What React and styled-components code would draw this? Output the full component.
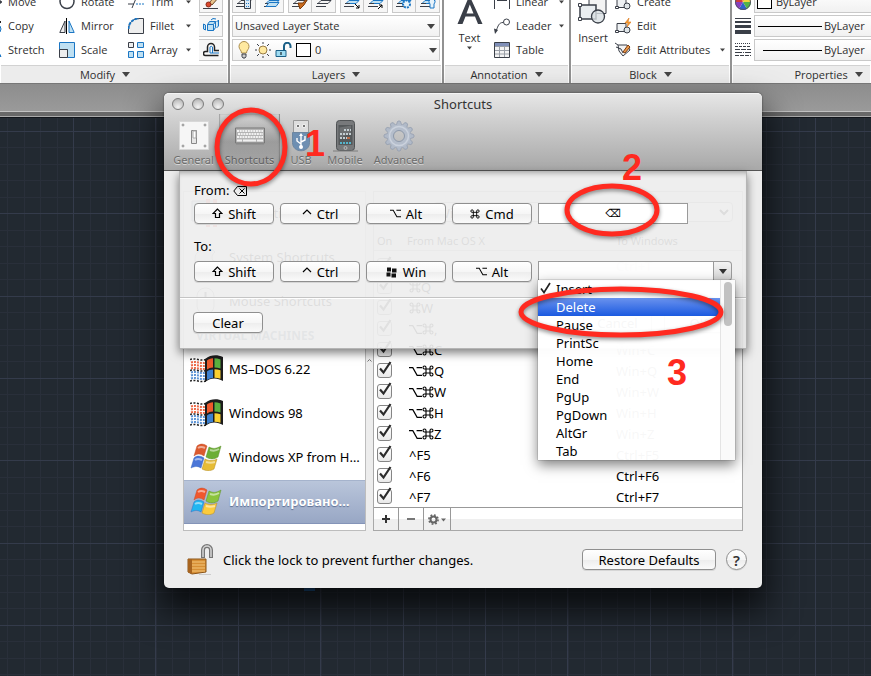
import React from "react";
import styled, { createGlobalStyle, css } from "styled-components";

const Global = createGlobalStyle`
  *, *::before, *::after { box-sizing: border-box; }
  html, body { margin: 0; }
  body { background: #222931; overflow: hidden; }
  button, input, select { font: inherit; color: inherit; margin: 0; }
`;

const macFont = `"Noto Sans", "DejaVu Sans", sans-serif`;
const ink = "#3a3f48";
const blue = "#1b76c4";
const pale = "#bfe0f2";
const red = "#ff2a20";

/* ---------- page ---------- */
const Page = styled.div`
  position: relative;
  min-height: 100vh;
  display: flex;
  flex-direction: column;
  overflow: hidden;
`;
const Ribbon = styled.header`
  display: grid;
  grid-template-columns: 230px 214px 127px 161px minmax(139px, 1fr);
  height: 84px;
  background: #fff;
  border-bottom: 1px solid #777;
  font: 11px/16px "Open Sans", sans-serif;
  color: #2f2f2f;
`;
const Panel = styled.section`
  display: flex;
  flex-direction: column;
  overflow: hidden;
  min-width: 0;
  border-right: ${(p) => (p.$last ? "0" : "2px solid #929292")};
`;
const PanelBody = styled.div`
  height: 65px;
  padding: 0 ${(p) => p.$right || 0}px 3px ${(p) => p.$left || 0}px;
  display: flex;
  align-items: flex-end;
  justify-content: ${(p) => p.$justify || "flex-start"};
`;
const PanelTitle = styled.button`
  height: 18px;
  margin: 0 1px;
  padding: 0 ${(p) => p.$right || 0}px 0 ${(p) => p.$left || 0}px;
  border: 0;
  border-top: 1px solid #d2d2d2;
  background: #ececec;
  display: flex;
  align-items: center;
  justify-content: center;
  gap: 7px;
`;
const Stack = styled.div`
  flex: none;
  width: ${(p) => (p.$w ? `${p.$w}px` : "auto")};
  display: flex;
  flex-direction: column;
`;
const Tool = styled.button`
  height: 24px;
  padding: 0;
  border: 0;
  background: none;
  display: flex;
  align-items: center;
  gap: 6px;
  white-space: nowrap;
  text-align: left;
`;
const ToolText = styled.span`
  min-width: ${(p) => p.$w || 0}px;
`;
const Square = styled.button`
  width: 24px;
  height: 22px;
  margin: 1px 0;
  padding: 0;
  border: 1px solid #c9c9c9;
  background: #f6f6f6;
  display: grid;
  place-items: center;
  & + & { border-left-width: ${(p) => (p.$joined ? 0 : 1)}px; }
`;
const Strip = styled.div`
  display: flex;
  gap: 4px;
`;
const Pair = styled.div`
  display: flex;
`;
const Field = styled.button`
  height: 22px;
  margin: 1px 0;
  padding: 0 ${(p) => p.$right || 4}px 0 ${(p) => p.$left || 2}px;
  border: 1px solid #c9c9c9;
  background: linear-gradient(#fff, #f1f1f1);
  display: flex;
  align-items: center;
  gap: ${(p) => p.$gap || 4}px;
  white-space: nowrap;
`;
const Grow = styled.span`
  flex: 1;
  text-align: left;
`;
const Swatch = styled.span`
  width: 15px;
  height: 14px;
  border: 1px solid #000;
  background: #fff;
`;
const Rule = styled.span`
  height: 1px;
  width: ${(p) => p.$w}px;
  background: #000;
`;
const BigTool = styled.button`
  width: ${(p) => p.$w}px;
  padding: 0;
  border: 0;
  background: none;
  display: flex;
  flex-direction: column;
  align-items: center;
  margin-bottom: ${(p) => p.$up}px;
  & > svg:first-child { margin-bottom: 5px; }
`;
const PropRow = styled.div`
  height: 24px;
  display: grid;
  grid-template-columns: 19px 1fr;
  align-items: center;
`;
const Dock = styled.div`
  height: 34px;
  background: linear-gradient(#8d8d8d, #9a9a9a 27px, #c2c2c2 27px, #c2c2c2 28px, #686868 28px, #686868 32px, #aaa 32px, #aaa 33px, #11151b 33px);
`;
const Canvas = styled.div`
  flex: 1;
  background: #222931;
  display: flex;
  & > svg { flex: 1; }
`;

/* ---------- dialog ---------- */
const Dialog = styled.main`
  position: absolute;
  top: 93px;
  left: 164px;
  right: 109px;
  border-radius: 5px;
  background: #ededed;
  box-shadow: 0 18px 34px 4px rgba(0, 0, 0, 0.72), 0 0 2px rgba(0, 0, 0, 0.6);
  font: 13px/18px ${macFont};
  color: #000;
`;
const Chrome = styled.header`
  height: 78px;
  border-radius: 5px 5px 0 0;
  border-top: 1px solid #f4f4f4;
  border-bottom: 1px solid #555;
  background: linear-gradient(#e6e6e6, #cfcfcf 35%, #a8a8a8);
`;
const TitleRow = styled.div`
  height: 20px;
  padding: 0 8px;
  display: grid;
  grid-template-columns: 100px 1fr 100px;
  align-items: center;
`;
const Title = styled.h1`
  margin: 0;
  font: inherit;
  color: #333;
  text-align: center;
`;
const Lights = styled.div`
  display: flex;
  gap: 8px;
`;
const Light = styled.button`
  width: 12px;
  height: 12px;
  padding: 0;
  border: 1px solid #7c7c7c;
  border-radius: 50%;
  background: radial-gradient(circle at 50% 80%, #f3f3f3, #c9c9c9 60%, #a5a5a5);
`;
const Tabs = styled.nav`
  display: flex;
  height: 56px;
  padding-left: 4px;
`;
const Tab = styled.button`
  width: ${(p) => p.$w}px;
  padding: 6px 0 0;
  border: 0;
  background: none;
  display: flex;
  flex-direction: column;
  align-items: center;
  gap: 1px;
  font-size: 11px;
  line-height: 14px;
  color: #6c6c6c;
  text-shadow: 0 1px 0 #d9d9d9;
  ${(p) => p.$on && css`
    background: linear-gradient(rgba(0, 0, 0, 0), rgba(0, 0, 0, 0.18) 50%, rgba(0, 0, 0, 0.03));
    box-shadow: inset 1px 0 1px #a2a2a2, inset -1px 0 1px #8a8a8a;
    color: #5f5f5f;
    text-shadow: 0 1px 0 #c4c4c4;
  `}
`;
const Body = styled.div`
  position: relative;
  padding: 20px 19px 0;
`;
const Columns = styled.div`
  display: flex;
  height: 340px;
`;
const Machines = styled.nav`
  width: 183px;
  flex: none;
  border: 1px solid #bdbdbd;
  background: #fff;
  overflow: hidden;
`;
const Machine = styled.button`
  width: 100%;
  height: 44px;
  padding: 0 0 2px 6px;
  border: 0;
  background: ${(p) => (p.$on ? "linear-gradient(#bac6db, #97a6c4)" : "none")};
  box-shadow: ${(p) => (p.$on ? "inset 0 1px #a5b3cc, inset 0 -1px #8494b8" : "none")};
  color: ${(p) => (p.$on ? "#fff" : "#000")};
  font-weight: ${(p) => (p.$on ? 700 : 400)};
  text-shadow: ${(p) => (p.$on ? "0 1px 1px #5d6f93" : "none")};
  display: flex;
  align-items: center;
  gap: 5px;
  text-align: left;
  white-space: nowrap;
`;
const GroupName = styled.h2`
  height: 24px;
  margin: 0;
  padding: 2px 0 0 12px;
  font-size: 12px;
  line-height: 20px;
  color: #5d6f83;
`;
const Splitter = styled.div`
  width: 7px;
  flex: none;
  display: flex;
  padding: 167px 0 0 1px;
`;
const Profile = styled.section`
  flex: 1;
  min-width: 0;
  display: flex;
  flex-direction: column;
  border: 1px solid #a8a8a8;
  background: #fff;
`;
const ProfileRow = styled.div`
  height: 40px;
  flex: none;
  background: #ededed;
  padding: 0 9px 0 8px;
  display: flex;
  align-items: center;
  gap: 8px;
`;
const ProfileSelect = styled.select`
  flex: 1;
  height: 20px;
  border: 1px solid #999;
  border-radius: 4px;
  background: #fff;
`;
const TableWrap = styled.div`
  flex: 1;
  min-height: 0;
  overflow: hidden;
`;
const Table = styled.table`
  width: 100%;
  border-collapse: collapse;
  table-layout: fixed;
  td, th { padding: 0; height: 21px; line-height: 20px; text-align: left; }
  th { height: 18px; line-height: 16px; font-size: 11px; font-weight: 400; background: #eee; border-bottom: 1px solid #bbb; }
  th:first-child { width: 33px; padding-left: 3px; }
  th:last-child { width: 126px; }
  td:first-child { padding-left: 3px; }
  td:nth-child(2) { padding-left: 2px; }
  tbody::before { content: ""; display: block; height: 5px; }
`;
const Tick = styled.label`
  position: relative;
  display: block;
  width: 16px;
  height: 16px;
  svg { position: absolute; left: 1px; top: -2px; pointer-events: none; }
`;
const TickInput = styled.input`
  appearance: none;
  display: block;
  width: 15px;
  height: 15px;
  border: 1px solid #858585;
  border-radius: 3px;
  background: linear-gradient(#fff, #e9e9e9);
`;
const Actions = styled.div`
  height: 23px;
  flex: none;
  border-top: 1px solid #999;
  background: linear-gradient(#fff 48%, #efefef 50%);
  display: flex;
`;
const Action = styled.button`
  width: ${(p) => p.$w}px;
  padding: 0;
  border: 0;
  border-right: 1px solid #999;
  background: none;
  display: grid;
  place-items: center;
`;
const Footer = styled.footer`
  height: 57px;
  padding: 0 15px 0 20px;
  display: flex;
  align-items: center;
  & > span { flex: 1; padding-left: 6px; white-space: nowrap; }
`;
const LockButton = styled.button`
  padding: 0;
  border: 0;
  background: none;
  display: flex;
`;
const MacButton = styled.button`
  width: ${(p) => p.$w}px;
  flex: none;
  height: 21px;
  padding: 0;
  border: 1px solid #8f8f8f;
  border-radius: 4px;
  background: linear-gradient(#fff, #f6f6f6 50%, #ededed 52%, #fafafa);
  box-shadow: 0 1px 0 #d6d6d6;
  line-height: 18px;
  display: flex;
  align-items: center;
  justify-content: center;
  gap: 5px;
  white-space: nowrap;
`;
const Help = styled(MacButton)`
  width: 21px;
  margin-left: 10px;
  border-radius: 50%;
  font-size: 15px;
  font-weight: 600;
  color: #333;
`;

/* ---------- sheet ---------- */
const Sheet = styled.section`
  position: absolute;
  top: 0;
  left: 15px;
  right: 15px;
  height: 178px;
  background: rgba(238, 238, 238, 0.93);
  border: 1px solid #b5b5b5;
  border-top: 0;
  box-shadow: 0 4px 9px rgba(0, 0, 0, 0.5), inset 0 6px 6px -5px rgba(0, 0, 0, 0.4);
  padding-top: 10px;
`;
const SheetGroup = styled.div`
  height: ${(p) => p.$h}px;
  padding: 0 10px 0 14px;
`;
const SheetLabel = styled.div`
  height: ${(p) => p.$h}px;
  line-height: 18px;
  display: flex;
  align-items: flex-start;
  gap: 4px;
  svg { margin-top: 4px; }
`;
const KeyRow = styled.div`
  display: flex;
  gap: 6px;
`;
const KeyInput = styled.input`
  width: 150px;
  height: 21px;
  padding: 0;
  border: 1px solid #9a9a9a;
  border-radius: 0;
  background: #fff;
  text-align: center;
  font-family: "DejaVu Sans", sans-serif;
  font-size: 11px;
`;
const Combo = styled.div`
  position: relative;
  flex: none;
  width: 194px;
  height: 20px;
  display: flex;
`;
const ComboInput = styled.input`
  flex: 1;
  min-width: 0;
  padding: 0 4px;
  border: 1px solid #9a9a9a;
  background: rgba(255, 255, 255, 0.9);
`;
const ComboButton = styled.button`
  width: 18px;
  padding: 0;
  border: 1px solid #9a9a9a;
  border-left: 0;
  border-radius: 0 4px 4px 0;
  background: linear-gradient(#f4f4f4, #d6d6d6);
  display: grid;
  place-items: center;
`;
const Menu = styled.div`
  position: absolute;
  top: 19px;
  left: 0;
  width: 197px;
  display: flex;
  background: rgba(255, 255, 255, 0.97);
  box-shadow: 0 5px 12px rgba(0, 0, 0, 0.5), 0 0 1px rgba(0, 0, 0, 0.6);
`;
const Options = styled.ul`
  flex: 1;
  margin: 0;
  padding: 0;
  list-style: none;
`;
const Option = styled.li`
  height: 18px;
  line-height: 18px;
  display: grid;
  grid-template-columns: 18px 1fr;
  align-items: center;
  ${(p) => p.$on && css`
    color: #fff;
    background: linear-gradient(#6a92ee, #1b5ae0);
  `}
`;
const ScrollTrack = styled.div`
  width: 15px;
  padding: 2px 3px;
  border-left: 1px solid #e4e4e4;
  background: #fafafa;
`;
const ScrollThumb = styled.div`
  height: 44px;
  border-radius: 4px;
  background: #c1c1c1;
`;
const SheetFoot = styled.div`
  border-top: 1px solid #c4c4c4;
  box-shadow: inset 0 1px #fff;
  padding: 14px 13px 0;
  display: flex;
  gap: 12px;
  & > :first-child { margin-right: auto; }
`;
const Marks = styled.svg`
  position: absolute;
  top: 0;
  left: 0;
  pointer-events: none;
`;
const Ring = styled.ellipse`
  filter: drop-shadow(0 2px 2px rgba(0, 0, 0, 0.45));
`;

/* ---------- drawings ---------- */
const Ico = ({ w = 16, h = w, vb, children, ...rest }) => (
  <svg width={w} height={h} viewBox={vb || `0 0 ${w} ${h}`} fill="none" stroke={ink} strokeWidth="1" aria-hidden="true" {...rest}>{children}</svg>
);
const Down = ({ s = 5, c = "#444" }) => (
  <svg width={s} height={Math.ceil(s / 2) + 1} viewBox="0 0 8 5" aria-hidden="true"><path d="M0 0h8L4 5z" fill={c} /></svg>
);
const Tri = ({ s = 5 }) => <Down s={s} />;

const MoveIcon = () => <Ico><path d="M8 1v14M1 8h14M11 5l4 3-4 3" strokeWidth="2" /></Ico>;
const CopyIcon = () => <Ico><path d="M12 1v7M9 4h6" stroke="#222" strokeWidth="2" /><circle cx="11" cy="11" r="4" fill={pale} stroke={blue} /></Ico>;
const StretchIcon = () => <Ico><path d="M2 14.500 9 3l6 11.500z" fill={pale} stroke={blue} /></Ico>;
const RotateIcon = () => <Ico><circle cx="8" cy="7.500" r="7" strokeWidth="1.500" /></Ico>;
const MirrorIcon = () => <Ico><path d="M6 3v11.500H.8z" fill="#eee" /><path d="M10 3v11.500h5.200z" fill={pale} stroke={blue} /><path d="M7.500 0v16" stroke="#000" /></Ico>;
const ScaleIcon = () => <Ico><path d="M.5.5h15v15h-7v-8h-8z" fill={pale} stroke={blue} /><path d="M.5 7.500h8v8h-8z" fill="#eee" /></Ico>;
const TrimIcon = () => <Ico><path d="M0 10h6M4 14l5-12" /><path d="M8 10h8" stroke={blue} strokeDasharray="2 1" /></Ico>;
const FilletIcon = () => <Ico><path d="M.5 15.500V11C.5 5 5 .5 11 .5h4.500v15z" fill="#eee" /><path d="M.5 11C.5 5 5 .5 11 .5" stroke={blue} strokeWidth="2" strokeDasharray="3 1" /></Ico>;
const ArrayIcon = () => <Ico><path d="M.5.5h5v5h-5z" fill="#eee" /><path d="M9.500.5h6v5h-6zM.5 9.500h5v6h-5zM9.500 9.500h6v6h-6z" fill={pale} stroke={blue} /></Ico>;
const EraseIcon = () => <Ico><path d="M6 9 13 1l3 2-7 8z" fill="#e9c38b" stroke="#6a4a2a" /><circle cx="5.500" cy="10.500" r="2.500" fill="#d9472c" stroke="#8c2a18" /><path d="M0 14.500h15" /></Ico>;
const ExplodeIcon = () => <Ico><path d="M4.500 6.500h6v6h-6zM4.500 6.500l2-3h6l-2 3M12.500 3.500v6l-2 3" fill={pale} stroke={blue} /><path d="M.5 6l2 1v5l-2-1zM13.500 4l2-2v6l-2 2M8 2l2-1.500 3 .5" fill={pale} stroke={blue} /></Ico>;
const OffsetIcon = () => <Ico><path d="M15.500 13.500H2.500a2 2 0 0 1 0-4h2V5a3.500 3.500 0 0 1 7 0v3.500H16" stroke="#222" strokeWidth="1.500" /><path d="M16 11H7V5a1.500 1.500 0 0 1 2.500 0v6" stroke={blue} /></Ico>;
const LayerIcon = ({ kind }) => (
  <Ico>
    <path d="M5 2.500h10l-3 3H2zM5 6.500h10l-3 3H2z" fill={kind > 3 || kind === 1 ? pale : "#f3f3f3"} stroke={kind === 3 || kind === 0 || kind === 2 ? ink : blue} />
    <path d="M1 9.500h5M0 12.500h10" />
    {kind === 0 && <path d="M8.500 3.500h6v11h-6z" fill="#dbe9f4" />}
    {kind === 0 && <path d="M10 6h3M10 9.500h1M12 9.500h1M10 12.500h1M12 12.500h1" stroke={blue} />}
    {kind === 1 && <path d="M5 8.500h10l-3 4H2z" fill={pale} stroke={blue} />}
    {kind === 2 && <path d="M6 9l5 0 3-4 1 1-3 5-4 4z" fill="#c96a1c" stroke="#7c3c0c" />}
    {kind === 4 && <path d="M11 10l4 4M15 11v3h-3" stroke="#000" />}
    {kind === 5 && <path d="M10 15l4-4M11 11h3v3" stroke="#000" />}
    {kind === 6 && <circle cx="10.500" cy="10" r="3.500" fill="#eaf6fc" stroke={blue} strokeWidth="2" strokeDasharray="2 1" />}
    {kind === 7 && <path d="M10 10a3 3 0 1 1 4 0v4h-4z" fill="#e7f3fb" stroke={blue} />}
  </Ico>
);
const BulbIcon = () => <Ico w={14} h={18}><path d="M4.500 12C4.500 9 2 8.500 2 5.500a5 5 0 0 1 10 0C12 8.500 9.500 9 9.500 12z" fill="#ffe9a0" stroke="#ab8d4d" /><path d="M5 13h4v2.500L8 17H6l-1-1.500z" fill="#ccc" /></Ico>;
const SunIcon = () => <Ico><circle cx="8" cy="8" r="4" fill="#ffe9a0" stroke="#997c45" /><path d="M8 0v2M8 14v2M0 8h2M14 8h2M2 2l2 2M12 12l2 2M2 14l2-2M12 4l2-2" /></Ico>;
const UnlockIcon = () => <Ico w={17} h={16}><path d="M1 8.500h10v6H1z" fill="#9fdcf2" stroke="#1a5f86" /><path d="M9 8V4a3.200 3.200 0 0 1 6.500 0v2" stroke="#1a5f86" strokeWidth="2" /><path d="M6 10v3" stroke="#000" /></Ico>;
const TextIcon = () => <Ico w={26} h={26}><path d="M.5 25 10.500 1h4L25.500 25h-4.500l-3-7.500H8.500L5.500 25zM9.500 14.500h7L12.800 5.500z" fill={ink} stroke="none" fillRule="evenodd" /></Ico>;
const LinearIcon = () => <Ico><path d="M.5 15V4.500M15.500 15V4.500M3 6.500h10" /></Ico>;
const LeaderIcon = () => <Ico><circle cx="12.500" cy="4" r="3" /><path d="M9 4.500C5 4.500 4 8 2.500 12" /><path d="M0 10.500 4 12 1 16z" fill={ink} stroke="none" /></Ico>;
const TableIcon = () => <Ico><path d="M.5.5h15v15H.5z" fill="#f4f4f4" /><path d="M1 1h14v3H1z" fill="#7f8fb8" stroke="none" /><path d="M1 4.500h14M1 8.500h14M1 12h14M5.500 5v10M10.500 5v10" stroke="#9a9fa7" /></Ico>;
const InsertIcon = () => <Ico w={30} h={26}><path d="M11 .5h17v14H11z" fill="#f3f3f3" /><path d="M2 6h16v14H2z" fill="#e9edf0" strokeWidth="1.500" /><circle cx="20" cy="17.500" r="6.500" fill="#d9e0e4" fillOpacity=".8" strokeWidth="1.300" /><path d="M.5 4.500h3v3h-3zM.5 18.500h3v3h-3z" fill="#fff" /></Ico>;
const BlockIcon = ({ kind }) => (
  <Ico>
    {kind < 2 && <><path d="M2 5.500h9v8H2z" fill="#eef1f3" /><circle cx="12" cy="12" r="3" fill="#dfe5e8" /><path d="M.5 12.500h3v2h-3z" fill="#fff" /></>}
    {kind === 1 && <path d="M14 0l-4 5h3l-1 4 4-5h-3z" fill="#f7a233" stroke="#d9741a" strokeWidth=".6" />}
    {kind === 2 && <><path d="M0 1l3 2M3 3h9l3 5-7 6-4-5z" fill="#f3f3f3" /><path d="M1 5l5 2 2 4" /><path d="M8 10l5-7 2 2-5 6z" fill="#ec9a4c" stroke="#7a3c10" /></>}
  </Ico>
);
const WheelIcon = () => (
  <Ico w={16}>
    {["#2f62c9", "#8a3fc0", "#d33b3b", "#f08a2c", "#f3d33c", "#53b447"].map((c, i) => (
      <path key={c} d="M8 8V0a8 8 0 0 1 6.900 4z" fill={c} stroke="none" transform={`rotate(${i * 60 + 150} 8 8)`} />
    ))}
    <circle cx="8" cy="8" r="7.500" stroke="#556" />
  </Ico>
);
const WeightIcon = () => <Ico><path d="M0 .5h16" /><path d="M0 4h16" strokeWidth="2" /><path d="M0 8.500h16" strokeWidth="3" /><path d="M0 14h16" strokeWidth="4" /></Ico>;
const LineTypeIcon = () => <Ico><path d="M0 1.500h16" strokeDasharray="1 1" /><path d="M0 4.500h16" strokeDasharray="3 1" /><path d="M0 7.500h16" strokeDasharray="5 1" /><path d="M0 10.500h16" strokeDasharray="7 1 1 1" /><path d="M0 13.500h16" strokeDasharray="4 1" /></Ico>;

const SwitchIcon = () => <Ico w={32}><path d="M1.500 1.500h29v28h-29z" fill="#f6f6f6" stroke="#d8d8d8" /><path d="M13.500 10.500h5v13h-5z" fill="#e6e6e6" stroke="#888" /><path d="M15 11h3v7h-3z" fill="#fff" stroke="#aaa" /><g fill="#bbb" stroke="#999"><circle cx="5" cy="5" r="1" /><circle cx="27" cy="5" r="1" /><circle cx="5" cy="26" r="1" /><circle cx="27" cy="26" r="1" /></g></Ico>;
const KeyboardIcon = () => <Ico w={32}><path d="M1.500 8h29v15h-29z" fill="#b4b4b4" stroke="#777" /><path d="M3 11h26M4 14h25M3 17h26" stroke="#f1f1f1" strokeWidth="2" strokeDasharray="2 .7" /><path d="M3 20.500h5M9 20.500h13M23 20.500h6" stroke="#f1f1f1" strokeWidth="2" /><path d="M2 24h28" stroke="#888" /></Ico>;
const UsbIcon = () => <Ico w={32}><path d="M8.500.500h15v12h-15z" fill="#dedede" stroke="#999" /><path d="M11.500 4.500h3v3h-3zM17.500 4.500h3v3h-3z" fill="#777" stroke="#eee" /><path d="M7.500 12.500h17v10c0 11-17 11-17 0z" fill="#6e8fb2" stroke="#6d86a0" /><path d="M16 28V15M16 24l-4-3v-3M16 22l4-2v-4" stroke="#fff" strokeWidth="1.400" /><path d="M14 16l2-3 2 3z" fill="#fff" stroke="none" /><circle cx="16" cy="27" r="2" fill="#fff" stroke="none" /></Ico>;
const PhoneIcon = () => <Ico w={32}><rect x="7.500" y=".5" width="18" height="30" rx="3" fill="#77797b" stroke="#4f5254" /><path d="M9.500 5h14v20h-14z" fill="#54585a" stroke="none" /><path d="M10.500 7.500 22 5.500v7l-11.500 6z" fill="#6d7072" stroke="none" /><path d="M15 10h7M11 14h11M11 18h7" stroke="#c3ced2" strokeWidth="2" strokeDasharray="2 1" /><path d="M11 23h11" stroke="#55b4cc" strokeWidth="2" strokeDasharray="2 1" /><path d="M18 18h3" stroke="#b56b48" strokeWidth="2" /><circle cx="16.500" cy="28" r="1.500" stroke="#bbb" /><path d="M4 31h25" stroke="#7d7d7d" /></Ico>;
const GearIcon = () => (
  <Ico w={32}>
    <g fill="#b1bac8" stroke="#8f9aac" strokeWidth=".7">
      {Array.from({ length: 12 }, (_, i) => <path key={i} d="M13 6 14.500 1.500Q16 .2 17.500 1.500L19 6z" transform={`rotate(${i * 30} 16 16)`} />)}
    </g>
    <circle cx="16" cy="16" r="8.500" stroke="#b4bdcb" strokeWidth="6" />
    <circle cx="16" cy="16" r="9.500" stroke="#cbd2dd" strokeWidth="1.500" />
    <circle cx="16" cy="16" r="5.500" stroke="#8c98aa" />
  </Ico>
);
const ClassicWin = () => (
  <Ico w={34} h={28}>
    <g strokeWidth="2" strokeDasharray="2 1">
      <path d="M1 7.500c5-2 10 2 15 0M1 10.500c5-2 10 2 15 0M1 13.500c5-2 10 2 15 0" stroke="#ed6a48" />
      <path d="M1 17.500c5-2 10 2 15 0M1 20.500c5-2 10 2 15 0M1 23.500c5-2 10 2 15 0" stroke="#5c94d6" />
    </g>
    <path d="M0 4.500c5-2 11 2 16 0M0 15.500c5-2 11 2 16 0M0 26c5-2 11 2 16 0" stroke="#222" strokeWidth="1.500" strokeDasharray="2 1.500" />
    <path d="M15 4C21-.5 27-.5 33 2v24c-6-3.500-12-3.500-18 1z" fill="#1c1c1c" stroke="none" />
    <path d="M17 5.500c2-1.500 3-2 6-2.300v9.300c-3 .2-4 .7-6 2z" fill="#ee5a2b" stroke="none" />
    <path d="M24.500 3.300c2 0 4 .4 6 1.300v9c-2-.8-4-1-6-1z" fill="#5bb13f" stroke="none" />
    <path d="M17 16.500c2-1.500 3-1.900 6-2v8.500c-3 .3-4 .8-6 2z" fill="#3b80cf" stroke="none" />
    <path d="M24.500 14.300c2 0 4 .3 6 1v8.500c-2-.8-4-1-6-1z" fill="#fad02f" stroke="none" />
  </Ico>
);
const FlagWin = ({ vista }) => (
  <Ico w={34} h={28}>
    <path d="M7 3c4-3 7-2 10 0l-3 10c-3-2-6-3-10 0z" fill={vista ? "#f1572d" : "#dc5a2e"} stroke="#c44c28" strokeWidth=".5" />
    <path d="M19 4c4 2 7 2 12-1l-3 11c-4 2.500-8 2.500-12 0z" fill={vista ? "#8bc43c" : "#6cae35"} stroke="#5c8e2c" strokeWidth=".5" />
    <path d="M4 15c3-3 7-2 10 0l-3 10c-3-2-6-2-10 0z" fill={vista ? "#21b6f0" : "#4a76d8"} stroke="#3b6ac0" strokeWidth=".5" />
    <path d="M15 16c4 2 8 2 12 0l-3 10c-4 2.500-8 2-12 0z" fill={vista ? "#fccb3c" : "#e6bc35"} stroke="#b58d24" strokeWidth=".5" />
    <path d="M8 5c3-2 5-1 7 0M20 7c3 1 6 1 9-1M5 17c3-2 5-1 7 0M16 19c3 1 6 1 9 0" stroke="#fff" strokeOpacity=".5" strokeWidth="2" />
  </Ico>
);
const AppIcon = () => <Ico w={34} h={28}><path d="M2 2h22v20H2z" fill="#bfe0f0" stroke="#778" /><path d="M16 0h4v28h-4zM23 0h4v28h-4z" fill="#e65a4c" stroke="none" /></Ico>;
const AppleIcon = () => <Ico w={34} h={28}><path d="M14 8c3-3 9-2 11 1-5 4-3 9 1 11-4 8-8 6-12 5-5 3-9-3-9-9 0-7 5-9 9-8z" fill="#eee" stroke="#999" /></Ico>;
const MouseIcon = () => <Ico w={34} h={28}><rect x="7" y="1" width="17" height="26" rx="8" fill="#f5f5f5" stroke="#999" /><path d="M15.500 5v6" strokeWidth="2" /></Ico>;
const LockIcon = () => (
  <Ico w={33} h={34}>
    <path d="M19 15V7a4 4 0 0 1 8 0v8" stroke="#767676" strokeWidth="4" /><path d="M19 14V7a4 4 0 0 1 8 0v7" stroke="#d6d6d6" strokeWidth="1.500" />
    <path d="M4 16h18v13L8 31l-4-2z" fill="#d78f35" stroke="#8a5418" /><path d="M4 16h4v15l-4-2z" fill="#a8641f" stroke="none" />
    <path d="M8 19h13M8 22h13M8 25h13M8 28h13" stroke="#f4c67c" />
    <path d="M15 31.500h12" stroke="#ccc" strokeWidth="1" />
  </Ico>
);
const ShiftKey = () => <Ico w={11} h={11}><path d="M5.500 1 1 5.500h2.500v4h4v-4H10z" stroke="#000" strokeWidth="1.200" /></Ico>;
const CtrlKey = () => <Ico w={10} h={12}><path d="M1 6l4-4 4 4" stroke="#000" strokeWidth="1.200" /></Ico>;
const AltKey = ({ s = 11 }) => <Ico w={s} h={s} vb="0 0 12 12"><path d="M0 2.500h3.500l4 7H12M7 2.500h5" stroke="#000" strokeWidth="1.100" /></Ico>;
const CmdKey = ({ s = 12 }) => <Ico w={s} h={s} vb="0 0 12 12"><path d="M4 4H2.500A1.500 1.500 0 1 1 4 2.500v7A1.500 1.500 0 1 1 2.500 8h7A1.500 1.500 0 1 1 8 9.500v-7A1.500 1.500 0 1 1 9.500 4z" stroke="#000" strokeWidth="1.100" /></Ico>;
const WinKey = () => <Ico w={12}><path d="M1 1.500h4v4H1zM6 2.500h4.500v4H6zM.5 6.500h4v4h-4zM5.500 7.500h4.500v4H5.500z" fill="#111" stroke="none" /></Ico>;
const Backspace = () => <Ico w={15} h={12}><path d="M4.500 1.500h9v9h-9L.8 6zM6.500 3.500l5 5M11.500 3.500l-5 5" stroke="#000" /></Ico>;
const CheckMark = () => <Ico w={14} h={14}><path d="M2 7.500 5.500 11.500 12.500 1" stroke="#2b2b2b" strokeWidth="2.200" /></Ico>;

/* ---------- parts ---------- */
const Combination = styled.span`
  display: flex;
  align-items: center;
  height: 20px;
`;
const Keys = ({ text }) => (
  <Combination>
    {[...text].map((c, i) => (c === "⌥" ? <AltKey key={i} s={13} /> : c === "⌘" ? <CmdKey key={i} s={12} /> : c))}
  </Combination>
);

const range = (from, step, count) => Array.from({ length: count }, (_, i) => Math.round(from + i * step));
const Grid = () => (
  <svg width="100%" aria-hidden="true" shapeRendering="crispEdges">
    <g fill="#292f3a">
      {range(-9, 16.48, 160).map((x) => <rect key={x} x={x} y="0" width="1" height="100%" />)}
      {range(13, 16.46, 120).map((y) => <rect key={y} x="0" y={y} width="100%" height="1" />)}
    </g>
    <g fill="#343b4b">
      {range(73, 82.4, 32).map((x) => <rect key={x} x={x} y="0" width="1" height="100%" />)}
      {range(13, 82.3, 24).map((y) => <rect key={y} x="0" y={y} width="100%" height="1" />)}
    </g>
    <rect x="304" y="470" width="11" height="3" fill="#205a96" />
  </svg>
);

const rows = [
  ["⌘T", "Ctrl+T"], ["⌘Q", "Alt+F4"], ["⌘W", "Ctrl+W"], ["⌥⌘,", "Win+,"], ["⌥⌘C", "Win+C"], ["⌥⌘Q", "Win+Q"],
  ["⌥⌘W", "Win+W"], ["⌥⌘H", "Win+H"], ["⌥⌘Z", "Win+Z"], ["^F5", "Ctrl+F5"], ["^F6", "Ctrl+F6"], ["^F7", "Ctrl+F7"],
];
const options = ["Insert", "Delete", "Pause", "PrintSc", "Home", "End", "PgUp", "PgDown", "AltGr", "Tab"];

const Item = ({ icon, children, arrow, w }) => (
  <Tool>{icon}<ToolText $w={w}>{children}</ToolText>{arrow && <Tri />}</Tool>
);

export default function App() {
  return (
    <Page>
      <Global />
      <Ribbon>
        <Panel>
          <PanelBody $right={5} $justify="flex-end">
            <Stack $w={73}>
              <Item icon={<MoveIcon />}>Move</Item>
              <Item icon={<CopyIcon />}>Copy</Item>
              <Item icon={<StretchIcon />}>Stretch</Item>
            </Stack>
            <Stack $w={69}>
              <Item icon={<RotateIcon />}>Rotate</Item>
              <Item icon={<MirrorIcon />}>Mirror</Item>
              <Item icon={<ScaleIcon />}>Scale</Item>
            </Stack>
            <Stack $w={71}>
              <Item icon={<TrimIcon />} arrow w={30}>Trim</Item>
              <Item icon={<FilletIcon />} arrow w={30}>Fillet</Item>
              <Item icon={<ArrayIcon />} arrow w={30}>Array</Item>
            </Stack>
            <Stack>
              <Square aria-label="Erase"><EraseIcon /></Square>
              <Square aria-label="Explode"><ExplodeIcon /></Square>
              <Square aria-label="Offset"><OffsetIcon /></Square>
            </Stack>
          </PanelBody>
          <PanelTitle $right={18}>Modify <Down s={8} /></PanelTitle>
        </Panel>
        <Panel>
          <PanelBody $left={2}>
            <Stack $w={208}>
              <Strip>
                <Square aria-label="Layer properties"><LayerIcon kind={0} /></Square>
                <Square aria-label="Layer off"><LayerIcon kind={1} /></Square>
                <Pair><Square $joined aria-label="Match layer"><LayerIcon kind={2} /></Square><Square $joined aria-label="Previous layer"><LayerIcon kind={3} /></Square></Pair>
                <Pair><Square $joined aria-label="Isolate layer"><LayerIcon kind={4} /></Square><Square $joined aria-label="Unisolate layer"><LayerIcon kind={5} /></Square></Pair>
                <Pair><Square $joined aria-label="Freeze layer"><LayerIcon kind={6} /></Square><Square $joined aria-label="Turn layer on"><LayerIcon kind={7} /></Square></Pair>
              </Strip>
              <Field><Grow>Unsaved Layer State</Grow><Down s={8} /></Field>
              <Field $left={4} $right={2}><BulbIcon /><SunIcon /><UnlockIcon /><Swatch /><Grow>0</Grow><Down s={8} /></Field>
            </Stack>
          </PanelBody>
          <PanelTitle>Layers <Down s={8} /></PanelTitle>
        </Panel>
        <Panel>
          <PanelBody $left={1}>
            <BigTool $w={49} $up={12}><TextIcon />Text<Tri /></BigTool>
            <Stack $w={74}>
              <Item icon={<LinearIcon />} arrow w={37}>Linear</Item>
              <Item icon={<LeaderIcon />} arrow w={37}>Leader</Item>
              <Item icon={<TableIcon />}>Table</Item>
            </Stack>
          </PanelBody>
          <PanelTitle>Annotation <Down s={8} /></PanelTitle>
        </Panel>
        <Panel>
          <PanelBody $left={0}>
            <BigTool $w={44} $up={16}><InsertIcon />Insert</BigTool>
            <Stack>
              <Item icon={<BlockIcon kind={0} />}>Create</Item>
              <Item icon={<BlockIcon kind={1} />}>Edit</Item>
              <Item icon={<BlockIcon kind={2} />} arrow w={77}>Edit Attributes</Item>
            </Stack>
          </PanelBody>
          <PanelTitle>Block <Down s={8} /></PanelTitle>
        </Panel>
        <Panel $last>
          <PanelBody $left={3}>
            <Stack $w={160}>
              <PropRow><WheelIcon /><Field><Swatch />ByLayer</Field></PropRow>
              <PropRow><WeightIcon /><Field $left={3} $gap={2}><Rule $w={64} />ByLayer</Field></PropRow>
              <PropRow><LineTypeIcon /><Field $left={8} $gap={2}><Rule $w={59} />ByLayer</Field></PropRow>
            </Stack>
          </PanelBody>
          <PanelTitle $left={54}>Properties <Down s={8} /></PanelTitle>
        </Panel>
      </Ribbon>
      <Dock />
      <Canvas><Grid /></Canvas>

      <Dialog>
        <Chrome>
          <TitleRow>
            <Lights><Light aria-label="Close" /><Light aria-label="Minimize" /><Light aria-label="Zoom" /></Lights>
            <Title>Shortcuts</Title>
          </TitleRow>
          <Tabs>
            <Tab $w={51}><SwitchIcon />General</Tab>
            <Tab $w={61} $on><KeyboardIcon />Shortcuts</Tab>
            <Tab $w={42}><UsbIcon />USB</Tab>
            <Tab $w={46}><PhoneIcon />Mobile</Tab>
            <Tab $w={62}><GearIcon />Advanced</Tab>
          </Tabs>
        </Chrome>
        <Body>
          <Columns>
            <Machines aria-label="Shortcut groups">
              <Machine><AppIcon />Application Shortcuts</Machine>
              <Machine><AppleIcon />System Shortcuts</Machine>
              <Machine><MouseIcon />Mouse Shortcuts</Machine>
              <GroupName>VIRTUAL MACHINES</GroupName>
              <Machine><ClassicWin />MS–DOS 6.22</Machine>
              <Machine><ClassicWin />Windows 98</Machine>
              <Machine><FlagWin />Windows XP from H…</Machine>
              <Machine $on><FlagWin vista />Импортировано…</Machine>
            </Machines>
            <Splitter><Ico w={5} h={4}><path d="M.5 3.500l2-2 2 2" stroke="#777" /></Ico></Splitter>
            <Profile>
              <ProfileRow>
                <label htmlFor="profile">Profile:</label>
                <ProfileSelect id="profile"><option>Windows</option></ProfileSelect>
              </ProfileRow>
              <TableWrap>
                <Table>
                  <thead><tr><th>On</th><th>From Mac OS X</th><th>To Windows</th></tr></thead>
                  <tbody>
                    {rows.map(([from, to]) => (
                      <tr key={from}>
                        <td><Tick><TickInput type="checkbox" defaultChecked aria-label={`Enable ${from}`} /><CheckMark /></Tick></td>
                        <td><Keys text={from} /></td>
                        <td>{to}</td>
                      </tr>
                    ))}
                  </tbody>
                </Table>
              </TableWrap>
              <Actions>
                <Action $w={25} aria-label="Add"><Ico w={10}><path d="M5 1v8M1 5h8" strokeWidth="2" stroke="#333" /></Ico></Action>
                <Action $w={25} aria-label="Remove"><Ico w={10}><path d="M1 5h8" strokeWidth="2" stroke="#777" /></Ico></Action>
                <Action $w={27} aria-label="Options">
                  <Ico w={19} h={11}><circle cx="5.500" cy="5.500" r="3" strokeWidth="2" stroke="#666" /><circle cx="5.500" cy="5.500" r="4.600" strokeWidth="1.600" stroke="#666" strokeDasharray="1.800 1.800" /><path d="M13 4.500h5l-2.500 3z" fill="#666" stroke="none" /></Ico>
                </Action>
              </Actions>
            </Profile>
          </Columns>

          <Sheet aria-label="Edit shortcut">
            <SheetGroup $h={56}>
              <SheetLabel $h={22}>From: <Backspace /></SheetLabel>
              <KeyRow>
                <MacButton $w={80}><ShiftKey />Shift</MacButton>
                <MacButton $w={80}><CtrlKey />Ctrl</MacButton>
                <MacButton $w={80}><AltKey />Alt</MacButton>
                <MacButton $w={80}><CmdKey s={10} />Cmd</MacButton>
                <KeyInput aria-label="From key" defaultValue="⌫" />
              </KeyRow>
            </SheetGroup>
            <SheetGroup $h={60}>
              <SheetLabel as="label" htmlFor="to-key" $h={24}>To:</SheetLabel>
              <KeyRow>
                <MacButton $w={80}><ShiftKey />Shift</MacButton>
                <MacButton $w={80}><CtrlKey />Ctrl</MacButton>
                <MacButton $w={80}><WinKey />Win</MacButton>
                <MacButton $w={80}><AltKey />Alt</MacButton>
                <Combo>
                  <ComboInput id="to-key" defaultValue="" />
                  <ComboButton aria-label="Show keys"><Down s={8} c="#333" /></ComboButton>
                  <Menu>
                    <Options role="listbox" aria-label="Keys">
                      {options.map((o) => (
                        <Option key={o} role="option" aria-selected={o === "Insert"} $on={o === "Delete"}>
                          <span>{o === "Insert" && <Ico w={14} h={12}><path d="M3 6.500 6 10.500 12 1" stroke="#222" strokeWidth="1.700" /></Ico>}</span>
                          {o}
                        </Option>
                      ))}
                    </Options>
                    <ScrollTrack><ScrollThumb /></ScrollTrack>
                  </Menu>
                </Combo>
              </KeyRow>
            </SheetGroup>
            <SheetFoot>
              <MacButton $w={70}>Clear</MacButton>
              <MacButton $w={69}>Cancel</MacButton>
              <MacButton $w={69}>OK</MacButton>
            </SheetFoot>
          </Sheet>
        </Body>
        <Footer>
          <LockButton aria-label="Lock"><LockIcon /></LockButton>
          <span>Click the lock to prevent further changes.</span>
          <MacButton $w={134}>Restore Defaults</MacButton>
          <Help>?</Help>
        </Footer>
      </Dialog>

      <Marks width="871" height="676" fill="none" stroke={red} strokeWidth="5">
        <Ring cx="251" cy="147" rx="34" ry="37" />
        <Ring cx="612" cy="210" rx="45" ry="24" />
        <Ring cx="621" cy="312" rx="100" ry="23" />
        <g fill={red} stroke="none" fontFamily="Liberation Sans, sans-serif" fontWeight="700" fontSize="36" textAnchor="middle">
          <text x="315" y="156">1</text>
          <text x="632" y="180">2</text>
          <text x="677" y="385">3</text>
        </g>
      </Marks>
    </Page>
  );
}
